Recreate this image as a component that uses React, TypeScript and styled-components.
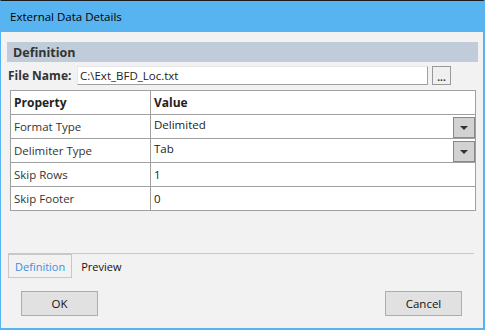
import styled, { createGlobalStyle } from "styled-components";

const GlobalStyle = createGlobalStyle`
  html, body {
    margin: 0;
    padding: 0;
    background: #ffffff;
  }
  * {
    box-sizing: border-box;
  }
`

const Window = styled.div`
  width: 485px;
  height: 330px;
  display: flex;
  flex-direction: column;
  border-top: 1px solid #1c1c1c;
  border-left: 1px solid #58b4f0;
  border-right: 2px solid #58b4f0;
  border-bottom: 2px solid #58b4f0;
  font-family: "Segoe UI", "Open Sans", sans-serif;
  font-size: 11px;
  color: #000;
`

const TitleBar = styled.div`
  height: 31px;
  flex-shrink: 0;
  background: #58b4f0;
  display: flex;
  align-items: center;
  padding-left: 9px;
  font-size: 11.5px;
`

const Body = styled.div`
  flex: 1;
  background: #f2f2f2;
  padding: 10px 5px 0 6px;
  display: flex;
  flex-direction: column;
`

const SectionHeader = styled.div`
  height: 20px;
  background: #c0ccd9;
  display: flex;
  align-items: center;
  padding-left: 6px;
  font-weight: 700;
  font-size: 12.5px;
  color: #333;
`

const FileRow = styled.div`
  height: 19px;
  margin-top: 4px;
  display: flex;
  align-items: center;
`

const FileLabel = styled.span`
  width: 70px;
  padding-left: 1px;
  font-weight: 700;
  font-size: 12px;
  color: #333;
`

const FileInput = styled.div`
  width: 351px;
  height: 19px;
  background: #fff;
  border-top: 1px solid #e8e8e8;
  border-left: 1px solid #e8e8e8;
  border-right: 1px solid #a0a0a0;
  border-bottom: 1px solid #a0a0a0;
  display: flex;
  align-items: center;
  padding-left: 2px;
  font-size: 11.5px;
  color: #222;
`

const BrowseButton = styled.div`
  width: 19px;
  height: 19px;
  margin-left: 4px;
  border: 1px solid #999;
  background: #f0f0f0;
  display: flex;
  justify-content: center;
  align-items: flex-end;
  padding-bottom: 3px;
  font-size: 10px;
  font-weight: 700;
  line-height: 8px;
  color: #333;
`

const Grid = styled.table`
  margin: 5px 0 0 3px;
  width: 466px;
  border-collapse: collapse;
  background: #fff;
  table-layout: fixed;
`

const HeadCell = styled.th<{ $w?: number }>`
  width: ${(p) => (p.$w ? `${p.$w}px` : "auto")};
  height: 24px;
  border: 1px solid #a0a0a0;
  text-align: left;
  padding: 0 0 0 3px;
  font-weight: 700;
  font-size: 12px;
  color: #222;
`

const Cell = styled.td`
  height: 24px;
  border: 1px solid #a0a0a0;
  padding: 0 0 0 3px;
  font-size: 11.5px;
  color: #333;
`

const ValueCell = styled.td`
  height: 24px;
  border: 1px solid #a0a0a0;
  padding: 0 0 0 3px;
`

const ValueInner = styled.div`
  display: flex;
  justify-content: space-between;
  align-items: center;
  font-size: 11.5px;
  color: #222;
  height: 22px;
`

const ValueText = styled.span<{ $raised?: boolean }>`
  margin-top: ${(p) => (p.$raised ? "-5px" : "0")};
`

const DropButton = styled.div`
  width: 22px;
  height: 21px;
  margin-top: 1px;
  border: 1px solid #888;
  background: #d2d2d2;
  display: flex;
  justify-content: center;
  align-items: center;
  padding-top: 2px;

  &::after {
    content: "";
    width: 0;
    height: 0;
    border-left: 4px solid transparent;
    border-right: 4px solid transparent;
    border-top: 4px solid #333;
  }
`

const Spacer = styled.div`
  flex: 1;
`

const TabStrip = styled.div`
  margin: 0 4px 0 1px;
  border-top: 1px solid #c8c8c8;
  display: flex;
  align-items: stretch;
  height: 25px;
`

const Tab = styled.div<{ $active?: boolean }>`
  display: flex;
  align-items: center;
  padding: 0 6px 0 ${(p) => (p.$active ? "6px" : "8px")};
  border: 1px solid ${(p) => (p.$active ? "#c8c8c8" : "transparent")};
  color: ${(p) => (p.$active ? "#3d8ee0" : "#111")};
  font-size: 11px;
`

const ButtonRow = styled.div`
  display: flex;
  justify-content: space-between;
  padding: 13px 16px 12px 14px;
`

const DialogButton = styled.div`
  width: 77px;
  height: 25px;
  background: #e1e1e1;
  border: 1px solid #adadad;
  display: flex;
  justify-content: center;
  align-items: center;
  font-size: 11.5px;
  color: #111;
`

const rows = [
  { name: "Format Type", value: "Delimited", drop: true },
  { name: "Delimiter Type", value: "Tab", drop: true },
  { name: "Skip Rows", value: "1", drop: false },
  { name: "Skip Footer", value: "0", drop: false },
]

const App = () => {
  return (
    <>
      <GlobalStyle />
      <Window>
        <TitleBar>External Data Details</TitleBar>
        <Body>
          <SectionHeader>Definition</SectionHeader>
          <FileRow>
            <FileLabel>File Name:</FileLabel>
            <FileInput>C:\Ext_BFD_Loc.txt</FileInput>
            <BrowseButton>...</BrowseButton>
          </FileRow>
          <Grid>
            <thead>
              <tr>
                <HeadCell $w={140}>Property</HeadCell>
                <HeadCell>Value</HeadCell>
              </tr>
            </thead>
            <tbody>
              {rows.map((r) => (
                <tr key={r.name}>
                  <Cell>{r.name}</Cell>
                  <ValueCell>
                    <ValueInner>
                      <ValueText $raised={r.drop}>{r.value}</ValueText>
                      {r.drop && <DropButton />}
                    </ValueInner>
                  </ValueCell>
                </tr>
              ))}
            </tbody>
          </Grid>
          <Spacer />
          <TabStrip>
            <Tab $active>Definition</Tab>
            <Tab>Preview</Tab>
          </TabStrip>
          <ButtonRow>
            <DialogButton>OK</DialogButton>
            <DialogButton>Cancel</DialogButton>
          </ButtonRow>
        </Body>
      </Window>
    </>
  )
}

export default App
